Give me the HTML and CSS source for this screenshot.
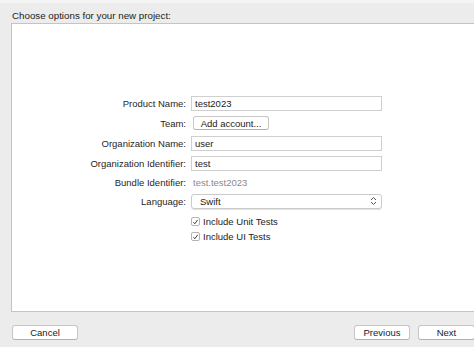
FILE: index.html
```html
<!DOCTYPE html>
<html lang="en">
<head>
  <meta charset="UTF-8">
  <title>Choose options for your new project</title>
  <link rel="stylesheet" href="styles.css">
</head>
<body>
  <div class="sheet">
    <div class="topline"></div>
    <h1 class="title">Choose options for your new project:</h1>

    <div class="panel">
      <div class="form">
        <label class="lbl">Product Name:</label>
        <div class="field"><div class="input">test2023</div></div>

        <label class="lbl">Team:</label>
        <div class="field"><button class="btn small">Add account...</button></div>

        <label class="lbl">Organization Name:</label>
        <div class="field"><div class="input">user</div></div>

        <label class="lbl">Organization Identifier:</label>
        <div class="field"><div class="input">test</div></div>

        <label class="lbl bundle">Bundle Identifier:</label>
        <div class="field bundle"><span class="muted">test.test2023</span></div>

        <label class="lbl lang">Language:</label>
        <div class="field lang">
          <div class="select">
            <span>Swift</span>
            <svg class="chev" width="7" height="10" viewBox="0 0 7 10">
              <path d="M1 4 L3.5 1.5 L6 4" fill="none" stroke="#555" stroke-width="1"/>
              <path d="M1 6 L3.5 8.5 L6 6" fill="none" stroke="#555" stroke-width="1"/>
            </svg>
          </div>
        </div>

        <div class="lbl check first"></div>
        <div class="field check first">
          <span class="box"><svg width="8" height="8" viewBox="0 0 8 8"><path d="M1.5 4.2 L3.2 6 L6.5 1.5" fill="none" stroke="#333" stroke-width="1.1"/></svg></span>
          <span>Include Unit Tests</span>
        </div>

        <div class="lbl check"></div>
        <div class="field check">
          <span class="box"><svg width="8" height="8" viewBox="0 0 8 8"><path d="M1.5 4.2 L3.2 6 L6.5 1.5" fill="none" stroke="#333" stroke-width="1.1"/></svg></span>
          <span>Include UI Tests</span>
        </div>
      </div>
    </div>

    <div class="footer">
      <button class="btn wide">Cancel</button>
      <div class="spacer"></div>
      <button class="btn mid">Previous</button>
      <button class="btn next">Next</button>
    </div>
  </div>
</body>
</html>
```

FILE: styles.css
```css
html, body {
  margin: 0;
  padding: 0;
}
body {
  width: 474px;
  height: 347px;
  overflow: hidden;
  background: #ececec;
  font-family: "Liberation Sans", Arial, sans-serif;
  font-size: 9.5px;
  color: #222;
}
.sheet {
  display: flex;
  flex-direction: column;
  height: 347px;
}
.topline {
  height: 3px;
  background: #f4f4f4;
}
.title {
  margin: 0;
  padding: 7px 0 0 12px;
  height: 13px;
  font-size: 9.75px;
  font-weight: normal;
  color: #222;
}
.panel {
  margin-left: 11px;
  width: 480px;
  height: 287px;
  background: #fff;
  border: 1px solid #c4c4c4;
  flex: none;
}
.form {
  display: grid;
  grid-template-columns: 178px 192px;
  padding-top: 69px;
}
.lbl {
  height: 20px;
  display: flex;
  align-items: center;
  justify-content: flex-end;
  padding-right: 4px;
  color: #262626;
}
.field {
  height: 20px;
  display: flex;
  align-items: center;
  padding-left: 1px;
}
.input {
  box-sizing: border-box;
  width: 192px;
  height: 15px;
  border: 1px solid #cfcfcf;
  padding: 0 3px;
  line-height: 13px;
  color: #222;
}
.bundle {
  height: 18px;
}
.muted {
  color: #8a8a8a;
  padding-left: 2px;
}
.select {
  box-sizing: border-box;
  width: 192px;
  height: 15px;
  border: 1px solid #cbcbcb;
  border-radius: 3px;
  padding: 0 4px 0 8px;
  display: flex;
  align-items: center;
  justify-content: space-between;
  box-shadow: 0 1px 0 #e2e2e2;
}
.check {
  height: 15px;
}
.check.first {
  margin-top: 3px;
}
.field.check {
  gap: 3px;
}
.box {
  box-sizing: border-box;
  width: 9px;
  height: 9px;
  border: 1px solid #b4b4b4;
  border-radius: 2px;
  display: flex;
  align-items: center;
  justify-content: center;
  background: #fff;
}
.btn {
  box-sizing: border-box;
  height: 15px;
  background: #fff;
  border: 1px solid #c6c6c6;
  border-bottom-color: #b2b2b2;
  border-radius: 3px;
  font-family: inherit;
  font-size: 9.5px;
  color: #222;
  padding: 0;
}
.btn.small {
  width: 76px;
  height: 14px;
  margin-left: 2px;
}
.footer {
  box-sizing: border-box;
  display: flex;
  align-items: flex-start;
  padding: 13px 0 0 12px;
  width: 475px;
  gap: 8px;
}
.btn.wide {
  width: 66px;
}
.btn.mid {
  width: 56px;
}
.btn.next {
  width: 57px;
}
.spacer {
  flex: 1;
}
```
